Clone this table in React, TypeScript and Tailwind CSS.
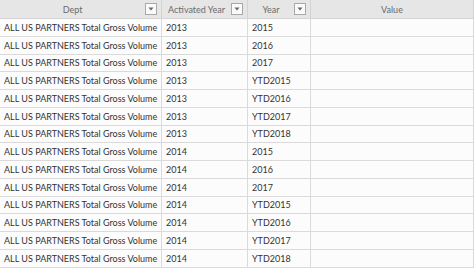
const ROWS: [string, string][] = [
  ['2013', '2015'],
  ['2013', '2016'],
  ['2013', '2017'],
  ['2013', 'YTD2015'],
  ['2013', 'YTD2016'],
  ['2013', 'YTD2017'],
  ['2013', 'YTD2018'],
  ['2014', '2015'],
  ['2014', '2016'],
  ['2014', '2017'],
  ['2014', 'YTD2015'],
  ['2014', 'YTD2016'],
  ['2014', 'YTD2017'],
  ['2014', 'YTD2018'],
];

function FilterButton() {
  return (
    <span className="w-[12px] h-[12px] shrink-0 mr-[4px] border border-[#a9a9a9] bg-[#fafafa] flex items-center justify-center">
      <svg width="6" height="4" viewBox="0 0 6 4">
        <path d="M0.5 0.5 L5.5 0.5 L3 3.5 Z" fill="#666" />
      </svg>
    </span>
  );
}

function HeaderCell({ label, width, filter = true }: { label: string; width: string; filter?: boolean }) {
  return (
    <div className={`${width} shrink-0 flex items-center border-r border-[#d4d4d4] text-[#6b6b6b]`}>
      <span className="flex-1 text-center whitespace-nowrap">{label}</span>
      {filter && <FilterButton />}
    </div>
  );
}

export default function App() {
  return (
    <div className="w-[474px] h-[268px] overflow-hidden bg-white text-[9px] font-['Lato',sans-serif] leading-none">
      <div className="flex h-[19px] bg-[#e6e6e6] border-b border-[#d4d4d4]">
        <HeaderCell label="Dept" width="w-[162px]" />
        <HeaderCell label="Activated Year" width="w-[86px]" />
        <HeaderCell label="Year" width="w-[63px]" />
        <HeaderCell label="Value" width="flex-1" filter={false} />
      </div>
      {ROWS.map(([activated, year], i) => (
        <div key={i} className="flex h-[17.75px] border-b border-[#dadada] bg-[#fcfcfc] text-[#333]">
          <div className="w-[162px] shrink-0 overflow-hidden pl-[4px] flex items-center border-r border-[#dadada] whitespace-nowrap">
            ALL US PARTNERS Total Gross Volume
          </div>
          <div className="w-[86px] shrink-0 pl-[4px] flex items-center border-r border-[#dadada]">{activated}</div>
          <div className="w-[63px] shrink-0 pl-[4px] flex items-center border-r border-[#dadada]">{year}</div>
          <div className="flex-1 border-r border-[#dadada]" />
        </div>
      ))}
    </div>
  );
}
